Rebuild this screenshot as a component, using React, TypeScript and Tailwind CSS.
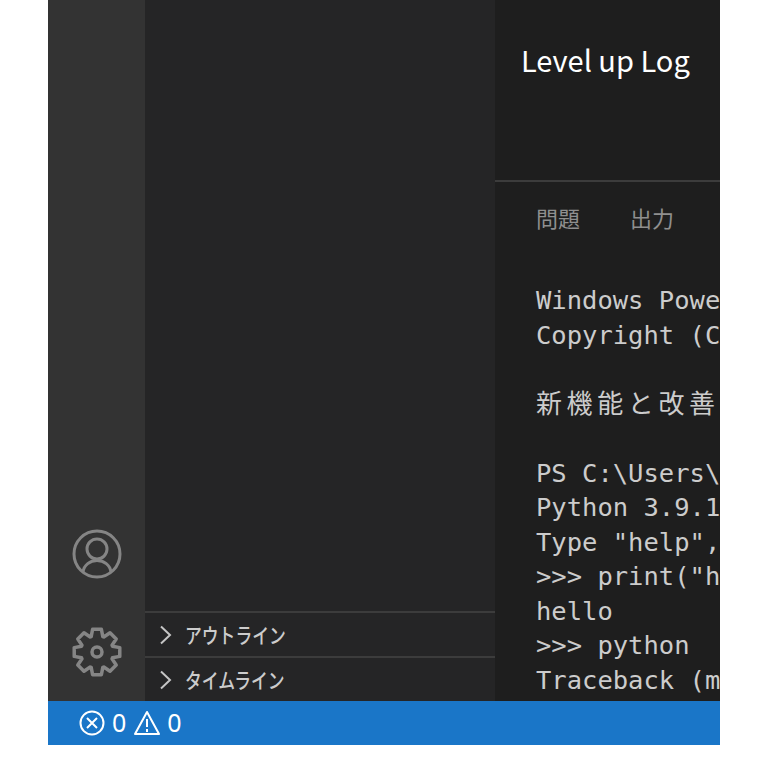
const terminalLines = [
  "Windows PowerShell",
  "Copyright (C) Microsoft Corporation. All rights reserved.",
  "",
  "新機能と改善のために最新の PowerShell をインストールしてください",
  "",
  "PS C:\\Users\\user> python",
  "Python 3.9.1 (tags/v3.9.1, Dec 7 2020)",
  'Type "help", "copyright", "credits" or "license"',
  '>>> print("hello")',
  "hello",
  ">>> python",
  "Traceback (most recent call last):",
]

function AccountIcon() {
  return (
    <svg width="50" height="50" viewBox="0 0 50 50" fill="none" stroke="#858585" strokeWidth="3">
      <circle cx="25" cy="25" r="23" />
      <circle cx="25" cy="20" r="10" />
      <path d="M11 43 C12 36 18 31.5 25 31.5 C32 31.5 38 36 39 43" />
    </svg>
  )
}

// eight teeth, one pointing straight up
function gearPath() {
  const pts: string[] = []
  for (let i = 0; i < 8; i++) {
    const a = (i * 45 - 90) * (Math.PI / 180)
    const spots: [number, number][] = [[16.5, -0.36], [23.2, -0.19], [23.2, 0.19], [16.5, 0.36]]
    for (const [r, d] of spots) {
      pts.push(`${(25 + r * Math.cos(a + d)).toFixed(2)} ${(25 + r * Math.sin(a + d)).toFixed(2)}`)
    }
  }
  return `M${pts.join(" L")} Z`
}

function GearIcon() {
  return (
    <svg width="50" height="50" viewBox="0 0 50 50" fill="none" stroke="#858585" strokeWidth="3.5" strokeLinejoin="round">
      <path d={gearPath()} />
      <circle cx="25" cy="25" r="5" />
    </svg>
  )
}

function Chevron() {
  return (
    <svg width="14" height="20" viewBox="0 0 14 20" fill="none" stroke="#c5c5c5" strokeWidth="2">
      <path d="M2 1.5 L11 10 L2 18.5" />
    </svg>
  )
}

function CollapsedSection({ label }: { label: string }) {
  return (
    <div className="flex h-[45px] shrink-0 items-center gap-[12px] border-t-2 border-[#3c3c3c] pl-[14px]">
      <Chevron />
      <span className="origin-left scale-x-[0.8] text-[21px] font-medium text-[#cccccc] [font-family:'Noto_Sans_CJK_JP',sans-serif]">{label}</span>
    </div>
  )
}

export default function App() {
  return (
    <div className="h-[768px] w-[768px] overflow-hidden bg-white pl-[48px]">
      <div className="flex h-[745px] w-[672px] flex-col overflow-hidden">
        <div className="flex min-h-0 flex-1">
          {/* Activity bar */}
          <div className="flex w-[97px] shrink-0 flex-col items-center justify-end gap-[48px] bg-[#333333] pb-[24px]">
            <AccountIcon />
            <GearIcon />
          </div>

          {/* Side bar */}
          <div className="flex w-[350px] shrink-0 flex-col justify-end bg-[#252526]">
            <CollapsedSection label="アウトライン" />
            <CollapsedSection label="タイムライン" />
          </div>

          {/* Editor and panel */}
          <div className="flex min-w-0 flex-1 flex-col bg-[#1e1e1e]">
            <div className="h-[180px] shrink-0 pl-[26px] pt-[38px] text-[29px] leading-[42px] text-white [font-family:'Noto_Sans_CJK_JP',sans-serif]">
              Level up Log
            </div>
            <div className="min-h-0 flex-1 overflow-hidden border-t-2 border-[#3c3c3c] pl-[41px]">
              <div className="flex gap-[50px] pt-[20px] text-[22px] leading-[30px] text-[#8f8f8f] [font-family:'Noto_Sans_CJK_JP',sans-serif]">
                <span>問題</span>
                <span>出力</span>
              </div>
              <div className="mt-[51px] whitespace-nowrap text-[25.5px] leading-[34.55px] text-[#cccccc] [font-family:'DejaVu_Sans_Mono','Noto_Sans_CJK_JP',monospace]">
                {terminalLines.map((line, i) => (
                  // line 3 is full-width, each glyph takes two mono columns
                  <div key={i} className={i === 3 ? "h-[34.55px] text-[26px] tracking-[4.6px]" : "h-[34.55px]"}>{line}</div>
                ))}
              </div>
            </div>
          </div>
        </div>

        {/* Status bar */}
        <div className="flex h-[44px] shrink-0 items-center bg-[#1a76c8] pl-[31px] text-[25px] text-white [font-family:'Noto_Sans',sans-serif]">
          <svg width="26" height="26" viewBox="0 0 26 26" fill="none" stroke="white" strokeWidth="2">
            <circle cx="13" cy="13" r="11.5" />
            <path d="M8 8 L18 18 M18 8 L8 18" />
          </svg>
          <span className="ml-[7px]">0</span>
          <svg className="ml-[8px]" width="26" height="26" viewBox="0 0 26 26" fill="none" stroke="white" strokeWidth="2">
            <path d="M13 2 L25 24 H1 Z" strokeLinejoin="round" />
            <path d="M13 9 V17 M13 19 V22" />
          </svg>
          <span className="ml-[7px]">0</span>
        </div>
      </div>
    </div>
  )
}
